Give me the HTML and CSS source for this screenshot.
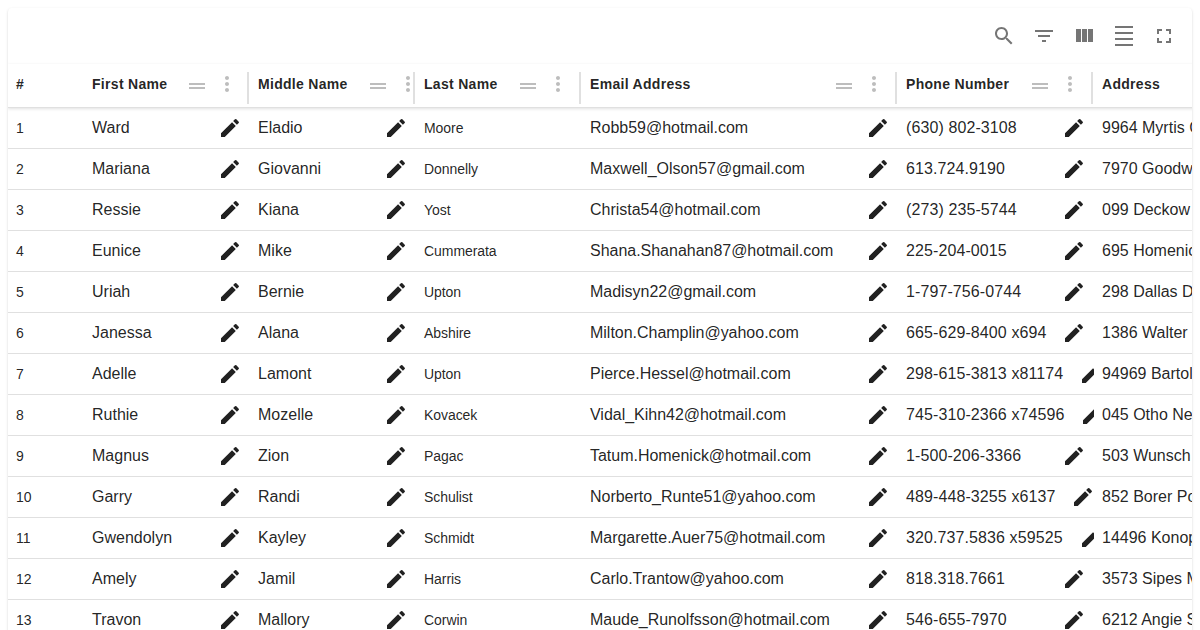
FILE: index.html
```html
<!DOCTYPE html>
<html lang="en">
<head>
<meta charset="utf-8">
<title>Table</title>
<link rel="stylesheet" href="styles.css">
</head>
<body>
<svg class="defs" width="0" height="0" aria-hidden="true">
  <symbol id="edit" viewBox="0 0 24 24"><path d="M3 17.25V21h3.75L17.81 9.94l-3.75-3.75L3 17.25zM20.71 7.04c.39-.39.39-1.02 0-1.41l-2.34-2.34a.9959.9959 0 0 0-1.41 0l-1.83 1.83 3.75 3.75 1.83-1.83z"/></symbol>
  <symbol id="drag" viewBox="0 0 24 24"><path d="M20 9H4v2h16V9zM4 15h16v-2H4v2z"/></symbol>
  <symbol id="more" viewBox="0 0 24 24"><path d="M12 8c1.1 0 2-.9 2-2s-.9-2-2-2-2 .9-2 2 .9 2 2 2zm0 2c-1.1 0-2 .9-2 2s.9 2 2 2 2-.9 2-2-.9-2-2-2zm0 6c-1.1 0-2 .9-2 2s.9 2 2 2 2-.9 2-2-.9-2-2-2z"/></symbol>
</svg>
<main class="paper">
  <div class="toolbar">
    <span class="tool"><svg viewBox="0 0 24 24"><path d="M15.5 14h-.79l-.28-.27C15.41 12.59 16 11.11 16 9.5 16 5.91 13.09 3 9.5 3S3 5.91 3 9.5 5.91 16 9.5 16c1.61 0 3.09-.59 4.23-1.57l.27.28v.79l5 4.99L20.49 19l-4.99-5zm-6 0C7.01 14 5 11.99 5 9.5S7.01 5 9.5 5 14 7.01 14 9.5 11.99 14 9.5 14z"/></svg></span>
    <span class="tool"><svg viewBox="0 0 24 24"><path d="M10 18h4v-2h-4v2zM3 6v2h18V6H3zm3 7h12v-2H6v2z"/></svg></span>
    <span class="tool"><svg viewBox="0 0 24 24"><path d="M10 18h5V5h-5v13zm-6 0h5V5H4v13zM16 5v13h5V5h-5z"/></svg></span>
    <span class="tool"><svg viewBox="0 0 24 24"><path d="M3 2h18v2H3zm0 18h18v2H3zm0-6h18v2H3zm0-6h18v2H3z"/></svg></span>
    <span class="tool"><svg viewBox="0 0 24 24"><path d="M7 14H5v5h5v-2H7v-3zm-2-4h2V7h3V5H5v5zm12 7h-3v2h5v-5h-2v3zM14 5v2h3v3h2V5h-5z"/></svg></span>
  </div>
  <div class="row head">
    <div class="hcell"><span class="htitle">#</span></div>
    <div class="hcell"><span class="htitle">First Name</span><span class="spacer"></span><svg class="grip"><use href="#drag"/></svg><svg class="dots"><use href="#more"/></svg><i class="divider"></i></div>
    <div class="hcell"><span class="htitle">Middle Name</span><span class="spacer"></span><svg class="grip"><use href="#drag"/></svg><svg class="dots"><use href="#more"/></svg><i class="divider"></i></div>
    <div class="hcell"><span class="htitle">Last Name</span><span class="spacer"></span><svg class="grip"><use href="#drag"/></svg><svg class="dots"><use href="#more"/></svg><i class="divider"></i></div>
    <div class="hcell"><span class="htitle">Email Address</span><span class="spacer"></span><svg class="grip"><use href="#drag"/></svg><svg class="dots"><use href="#more"/></svg><i class="divider"></i></div>
    <div class="hcell"><span class="htitle">Phone Number</span><span class="spacer"></span><svg class="grip"><use href="#drag"/></svg><svg class="dots"><use href="#more"/></svg><i class="divider"></i></div>
    <div class="hcell"><span class="htitle">Address</span></div>
  </div>
  <div class="row">
    <div class="cell small">1</div>
    <div class="cell"><span>Ward</span><svg class="pen"><use href="#edit"/></svg></div>
    <div class="cell"><span>Eladio</span><svg class="pen"><use href="#edit"/></svg></div>
    <div class="cell small"><span>Moore</span></div>
    <div class="cell"><span>Robb59@hotmail.com</span><svg class="pen"><use href="#edit"/></svg></div>
    <div class="cell"><span>(630) 802-3108</span><svg class="pen"><use href="#edit"/></svg></div>
    <div class="cell"><span>9964 Myrtis Crossing</span></div>
  </div>
  <div class="row">
    <div class="cell small">2</div>
    <div class="cell"><span>Mariana</span><svg class="pen"><use href="#edit"/></svg></div>
    <div class="cell"><span>Giovanni</span><svg class="pen"><use href="#edit"/></svg></div>
    <div class="cell small"><span>Donnelly</span></div>
    <div class="cell"><span>Maxwell_Olson57@gmail.com</span><svg class="pen"><use href="#edit"/></svg></div>
    <div class="cell"><span>613.724.9190</span><svg class="pen"><use href="#edit"/></svg></div>
    <div class="cell"><span>7970 Goodwin Street</span></div>
  </div>
  <div class="row">
    <div class="cell small">3</div>
    <div class="cell"><span>Ressie</span><svg class="pen"><use href="#edit"/></svg></div>
    <div class="cell"><span>Kiana</span><svg class="pen"><use href="#edit"/></svg></div>
    <div class="cell small"><span>Yost</span></div>
    <div class="cell"><span>Christa54@hotmail.com</span><svg class="pen"><use href="#edit"/></svg></div>
    <div class="cell"><span>(273) 235-5744</span><svg class="pen"><use href="#edit"/></svg></div>
    <div class="cell"><span>099 Deckow Lane</span></div>
  </div>
  <div class="row">
    <div class="cell small">4</div>
    <div class="cell"><span>Eunice</span><svg class="pen"><use href="#edit"/></svg></div>
    <div class="cell"><span>Mike</span><svg class="pen"><use href="#edit"/></svg></div>
    <div class="cell small"><span>Cummerata</span></div>
    <div class="cell"><span>Shana.Shanahan87@hotmail.com</span><svg class="pen"><use href="#edit"/></svg></div>
    <div class="cell"><span>225-204-0015</span><svg class="pen"><use href="#edit"/></svg></div>
    <div class="cell"><span>695 Homenick Road</span></div>
  </div>
  <div class="row">
    <div class="cell small">5</div>
    <div class="cell"><span>Uriah</span><svg class="pen"><use href="#edit"/></svg></div>
    <div class="cell"><span>Bernie</span><svg class="pen"><use href="#edit"/></svg></div>
    <div class="cell small"><span>Upton</span></div>
    <div class="cell"><span>Madisyn22@gmail.com</span><svg class="pen"><use href="#edit"/></svg></div>
    <div class="cell"><span>1-797-756-0744</span><svg class="pen"><use href="#edit"/></svg></div>
    <div class="cell"><span>298 Dallas Drive</span></div>
  </div>
  <div class="row">
    <div class="cell small">6</div>
    <div class="cell"><span>Janessa</span><svg class="pen"><use href="#edit"/></svg></div>
    <div class="cell"><span>Alana</span><svg class="pen"><use href="#edit"/></svg></div>
    <div class="cell small"><span>Abshire</span></div>
    <div class="cell"><span>Milton.Champlin@yahoo.com</span><svg class="pen"><use href="#edit"/></svg></div>
    <div class="cell"><span>665-629-8400 x694</span><svg class="pen"><use href="#edit"/></svg></div>
    <div class="cell"><span>1386 Walter Mews</span></div>
  </div>
  <div class="row">
    <div class="cell small">7</div>
    <div class="cell"><span>Adelle</span><svg class="pen"><use href="#edit"/></svg></div>
    <div class="cell"><span>Lamont</span><svg class="pen"><use href="#edit"/></svg></div>
    <div class="cell small"><span>Upton</span></div>
    <div class="cell"><span>Pierce.Hessel@hotmail.com</span><svg class="pen"><use href="#edit"/></svg></div>
    <div class="cell"><span>298-615-3813 x81174</span><svg class="pen"><use href="#edit"/></svg></div>
    <div class="cell"><span>94969 Bartoletti Park</span></div>
  </div>
  <div class="row">
    <div class="cell small">8</div>
    <div class="cell"><span>Ruthie</span><svg class="pen"><use href="#edit"/></svg></div>
    <div class="cell"><span>Mozelle</span><svg class="pen"><use href="#edit"/></svg></div>
    <div class="cell small"><span>Kovacek</span></div>
    <div class="cell"><span>Vidal_Kihn42@hotmail.com</span><svg class="pen"><use href="#edit"/></svg></div>
    <div class="cell"><span>745-310-2366 x74596</span><svg class="pen"><use href="#edit"/></svg></div>
    <div class="cell"><span>045 Otho Neck</span></div>
  </div>
  <div class="row">
    <div class="cell small">9</div>
    <div class="cell"><span>Magnus</span><svg class="pen"><use href="#edit"/></svg></div>
    <div class="cell"><span>Zion</span><svg class="pen"><use href="#edit"/></svg></div>
    <div class="cell small"><span>Pagac</span></div>
    <div class="cell"><span>Tatum.Homenick@hotmail.com</span><svg class="pen"><use href="#edit"/></svg></div>
    <div class="cell"><span>1-500-206-3366</span><svg class="pen"><use href="#edit"/></svg></div>
    <div class="cell"><span>503 Wunsch Glen</span></div>
  </div>
  <div class="row">
    <div class="cell small">10</div>
    <div class="cell"><span>Garry</span><svg class="pen"><use href="#edit"/></svg></div>
    <div class="cell"><span>Randi</span><svg class="pen"><use href="#edit"/></svg></div>
    <div class="cell small"><span>Schulist</span></div>
    <div class="cell"><span>Norberto_Runte51@yahoo.com</span><svg class="pen"><use href="#edit"/></svg></div>
    <div class="cell"><span>489-448-3255 x6137</span><svg class="pen"><use href="#edit"/></svg></div>
    <div class="cell"><span>852 Borer Port</span></div>
  </div>
  <div class="row">
    <div class="cell small">11</div>
    <div class="cell"><span>Gwendolyn</span><svg class="pen"><use href="#edit"/></svg></div>
    <div class="cell"><span>Kayley</span><svg class="pen"><use href="#edit"/></svg></div>
    <div class="cell small"><span>Schmidt</span></div>
    <div class="cell"><span>Margarette.Auer75@hotmail.com</span><svg class="pen"><use href="#edit"/></svg></div>
    <div class="cell"><span>320.737.5836 x59525</span><svg class="pen"><use href="#edit"/></svg></div>
    <div class="cell"><span>14496 Konopelski Way</span></div>
  </div>
  <div class="row">
    <div class="cell small">12</div>
    <div class="cell"><span>Amely</span><svg class="pen"><use href="#edit"/></svg></div>
    <div class="cell"><span>Jamil</span><svg class="pen"><use href="#edit"/></svg></div>
    <div class="cell small"><span>Harris</span></div>
    <div class="cell"><span>Carlo.Trantow@yahoo.com</span><svg class="pen"><use href="#edit"/></svg></div>
    <div class="cell"><span>818.318.7661</span><svg class="pen"><use href="#edit"/></svg></div>
    <div class="cell"><span>3573 Sipes Mill</span></div>
  </div>
  <div class="row">
    <div class="cell small">13</div>
    <div class="cell"><span>Travon</span><svg class="pen"><use href="#edit"/></svg></div>
    <div class="cell"><span>Mallory</span><svg class="pen"><use href="#edit"/></svg></div>
    <div class="cell small"><span>Corwin</span></div>
    <div class="cell"><span>Maude_Runolfsson@hotmail.com</span><svg class="pen"><use href="#edit"/></svg></div>
    <div class="cell"><span>546-655-7970</span><svg class="pen"><use href="#edit"/></svg></div>
    <div class="cell"><span>6212 Angie Station</span></div>
  </div>
</main>
</body>
</html>
```
FILE: styles.css
```css
html, body {
  margin: 0;
  height: 100%;
  overflow: hidden;
  background: #fff;
}
body {
  padding: 8px;
  box-sizing: border-box;
  font-family: "Liberation Sans", Arial, sans-serif;
  color: rgba(0, 0, 0, 0.87);
}
.defs {
  position: absolute;
}
.paper {
  width: 1184px;
  height: 640px;
  overflow: hidden;
  background: #fff;
  border-radius: 4px;
  box-shadow: 0 2px 1px -1px rgba(0,0,0,.2), 0 1px 1px 0 rgba(0,0,0,.14), 0 1px 3px 0 rgba(0,0,0,.12);
}
.toolbar {
  display: flex;
  justify-content: flex-end;
  height: 56px;
  box-sizing: border-box;
  padding: 8px 8px 8px 0;
}
.tool {
  display: flex;
  width: 40px;
  height: 40px;
  align-items: center;
  justify-content: center;
}
.tool svg {
  width: 24px;
  height: 24px;
  fill: rgba(0, 0, 0, 0.54);
}
.row {
  display: grid;
  grid-template-columns: 76px 166px 166px 166px 316px 196px 400px;
  width: 1486px;
  height: 41px;
  box-sizing: border-box;
  border-bottom: 1px solid #e0e0e0;
}
.head {
  position: relative;
  height: 44px;
  box-shadow: 0 1px 3px rgba(0, 0, 0, 0.12);
}
.hcell {
  position: relative;
  display: flex;
  align-items: center;
  padding: 0 8px 3px;
  box-sizing: border-box;
  min-width: 0;
}
.htitle {
  flex: none;
  font-size: 14px;
  font-weight: 700;
  letter-spacing: 0.3px;
  line-height: 24px;
  white-space: nowrap;
}
.spacer {
  flex: 1 0 18px;
}
.grip {
  flex: none;
  width: 24px;
  height: 24px;
  margin-top: 3px;
  margin-right: 6px;
  fill: rgba(0, 0, 0, 0.26);
}
.dots {
  flex: none;
  width: 24px;
  height: 24px;
  margin-right: 3px;
  fill: rgba(0, 0, 0, 0.26);
}
.hcell:nth-child(n+4) .dots {
  margin-right: 4px;
}
.divider {
  position: absolute;
  right: 1px;
  top: 8px;
  width: 2px;
  height: 32px;
  background: #e0e0e0;
}
.cell {
  display: flex;
  align-items: center;
  justify-content: space-between;
  padding: 0 8px;
  overflow: hidden;
  min-width: 0;
  font-size: 16px;
  white-space: nowrap;
}
.cell span {
  flex: none;
}
.small {
  font-size: 14px;
}
.cell.small:nth-child(4) {
  letter-spacing: -0.06px;
}
.cell:nth-child(5) {
  letter-spacing: -0.02px;
}
.cell:nth-child(6) {
  letter-spacing: 0.1px;
}
.pen {
  flex: none;
  width: 24px;
  height: 24px;
  margin-left: 16px;
  fill: rgba(0, 0, 0, 0.87);
}
```
